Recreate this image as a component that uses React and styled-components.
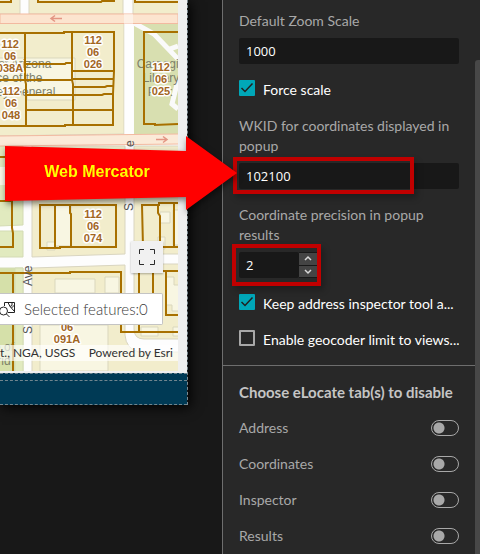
import React from 'react';
import styled, { createGlobalStyle, css } from 'styled-components';

const tabs = ['Address', 'Coordinates', 'Inspector', 'Results'];

function App() {
  return (
    <>
      <GlobalStyle />
      <Page>
        <Canvas>
          <Preview>
            <MapFrame>
              <MapDrawing />
              <FullscreenButton type="button" aria-label="Fullscreen">
                <svg width="16" height="16" viewBox="0 0 16 16" fill="none" stroke="#2b2b2b">
                  <path d="M.5 5V.5H5M11 .5h4.500V5M15.500 11v4.500H11M5 15.500H.5V11" />
                </svg>
              </FullscreenButton>
              <Selection>
                <SelectIcon />
                <span>Selected features:0</span>
              </Selection>
              <Attribution>
                <span>t., NGA, USGS</span>
                <span>Powered by Esri</span>
              </Attribution>
            </MapFrame>
            <PreviewFooter />
          </Preview>
        </Canvas>

        <Panel>
          <Settings>
            <Section>
              <Field>
                <Label htmlFor="zoom">Default Zoom Scale</Label>
                <TextInput id="zoom" type="text" defaultValue="1000" />
              </Field>
              <CheckRow>
                <Checkbox type="checkbox" defaultChecked />
                <CheckText>Force scale</CheckText>
              </CheckRow>
              <Field>
                <Label htmlFor="wkid">WKID for coordinates displayed in popup</Label>
                <InputWrap>
                  <TextInput id="wkid" type="text" defaultValue="102100" />
                  <WkidMark />
                </InputWrap>
              </Field>
              <Field>
                <Label htmlFor="precision">Coordinate precision in popup results</Label>
                <Stepper>
                  <NumberInput id="precision" type="number" defaultValue="2" />
                  <StepButtons>
                    <StepButton type="button" aria-label="Increase">
                      <Chevron d="M1 5l3-3 3 3" />
                    </StepButton>
                    <StepButton type="button" aria-label="Decrease">
                      <Chevron d="M1 2l3 3 3-3" />
                    </StepButton>
                  </StepButtons>
                  <PrecisionMark />
                </Stepper>
              </Field>
              <CheckRow>
                <Checkbox type="checkbox" defaultChecked />
                <CheckText>Keep address inspector tool a...</CheckText>
              </CheckRow>
              <CheckRow>
                <Checkbox type="checkbox" />
                <CheckText>Enable geocoder limit to views...</CheckText>
              </CheckRow>
            </Section>
            <Section $divided>
              <Title>Choose eLocate tab(s) to disable</Title>
              {tabs.map((tab) => (
                <ToggleRow key={tab}>
                  <span>{tab}</span>
                  <Toggle type="checkbox" role="switch" />
                </ToggleRow>
              ))}
            </Section>
          </Settings>
          <ScrollTrack>
            <ScrollThumb />
          </ScrollTrack>
        </Panel>

        <Callout viewBox="0 0 240 80" width="240" height="80" role="img">
          <path d="M5 13l181 5V3l51 37-51 37V64L5 68z" fill="#ff0000" />
          <CalloutText x="97" y="44">Web Mercator</CalloutText>
        </Callout>
      </Page>
    </>
  );
}

function Chevron({ d }) {
  return (
    <svg width="8" height="7" viewBox="0 0 8 7" fill="none" stroke="#d8d8d8" strokeWidth="1.500">
      <path d={d} />
    </svg>
  );
}

function SelectIcon() {
  return (
    <svg width="16" height="18" viewBox="0 0 16 18" fill="none" stroke="#222">
      <path d="M4.500 6V2.500h10v10H8" />
      <path d="M8 2.500l2 4 2-1v-3M10 6.500l4.500 5M14.500 5l-3 3" />
      <circle cx="3.500" cy="11" r="4" fill="#fff" />
      <path d="M6.500 14l3 3" />
    </svg>
  );
}

// every parcel number is stacked on its own lines
function ParcelLabel({ x, y, lines }) {
  return lines.map((line, i) => (
    <ParcelText key={line} x={x} y={y + i * 12}>
      {line}
    </ParcelText>
  ));
}

function MapDrawing() {
  return (
    <MapSvg viewBox="0 0 178 371" preserveAspectRatio="xMinYMin slice">
      <rect width="178" height="371" fill="#fdfdfd" />

      {/* blocks */}
      <g fill="#f2edcc" stroke="#d9d5c0">
        <path d="M-1-1h21v15H-1zM29-1h94v15H29zM133-1h46v15h-46z" />
        <path d="M-1 23h125v111l-125 2z" />
        <path d="M32 146h93v108l-93 3z" />
        <path d="M134 146h45v108h-45z" />
        <path d="M32 268l93-3v70q1 14 14 17h40v20H32z" />
        <path d="M134 264h45v75h-35q-10 0-10-10z" />
      </g>
      <g fill="#e1eabf" stroke="#d3dbb4">
        <path d="M-1 146h24v79l-24 1zM-1 231h24v26H-1z" />
        <path d="M-1 268h24v104H-1z" fill="#d5e0a9" />
        <path d="M15 268h8v104h-8z" />
      </g>
      <path d="M134 24h45v110h-45z" fill="#d8dfb0" />
      <path d="M134 23l20 11 24 25M167 50l11-4M178 80l-6 24 6 5" fill="none" stroke="#fafafa" strokeWidth="5" />

      {/* arterial roads */}
      <path d="M0 14h178v9.500H0z" fill="#fce4cf" stroke="#f2b9a0" />
      <path d="M-1 136l180-2v10l-180 2z" fill="#fbead8" stroke="#f2b9a0" />
      <path d="M124 14h9v120h-9z" fill="#fff" opacity=".45" />
      <g fill="none" stroke="#e39583" strokeWidth="1.500">
        <path d="M62 18.500H51M55 15.500l-4 3 4 3" />
        <path d="M156 139.500h11M163 136.500l4 3-4 3" />
      </g>

      {/* buildings */}
      <g fill="#f8f6e2" stroke="#dad7bd">
        <path d="M-1 58h76v42h-48v-5H-1z" />
        <path d="M55 205h16v41H55zM47 242h8v8h-8z" />
        <path d="M55 279h40v14H55zM105 277h14v16h-14z" />
        <path d="M40 325h68v46H40z" />
        <path d="M160 212h10v11h-10zM158 237h7v12h-7zM173 210h6v35h-6z" />
        <path d="M166 277h8v8h5v26h-7v-6h-6zM141 327h17v9h-17zM173 327h6v9h-6z" />
      </g>
      <path d="M0 167h5v18H0z" fill="#faf8e8" />

      <PlaceText x="25" y="68">st Arizona</PlaceText>
      <PlaceText x="18" y="82">ice of the</PlaceText>
      <PlaceText x="26" y="96">ey General</PlaceText>
      <PlaceText x="161" y="68">Carnegie</PlaceText>
      <PlaceText x="161" y="82">Library</PlaceText>
      <PlaceText x="160" y="96">Park</PlaceText>
      <PlaceText x="4" y="351">e of</PlaceText>
      <PlaceText x="4" y="365">rid</PlaceText>

      {/* parcel lines */}
      <g fill="none" stroke="#a87000" strokeWidth="2">
        <path d="M0 2h11V0M38 0v2h63l1-1h12V0M135 0v2h43" />
        <path d="M0 33h64v-1h50v39l-1 23v31H65v1H0M25 33v47l1 4v42M72 32v48l1 4v41" />
        <path d="M25 64h40l1-1h6M72 71h41M0 80h72l1-1h40M73 87h32l2-1h6M26 95h76l2-1h9M26 110h87" />
        <path d="M178 32h-34v92h11v1l23-1" />
        <path d="M0 201h12v27l1 5v14H0M0 157h5" />
        <path d="M40 205h76v42H60v1H40zM55 205v42M70 205v8l1 1v33" />
        <path d="M178 203h-19v2h-17l1 42h35M158 205v8l2 3v31M174 203v44" />
        <path d="M0 273h70v-1h51v60h57M13 273v98M139 272v60M153 272v21M178 271h-12v44h12M142 271h36" />
      </g>

      <ParcelLabel x={10} y={48} lines={['112', '06', '038A']} />
      <ParcelLabel x={11} y={95} lines={['112', '06', '048']} />
      <ParcelLabel x={93} y={44} lines={['112', '06', '026']} />
      <ParcelLabel x={161} y={71} lines={['112', '06', '025']} />
      <ParcelLabel x={93} y={218} lines={['112', '06', '074']} />
      <ParcelLabel x={67} y={331} lines={['06', '091A']} />

      <StreetText transform="translate(32 286) rotate(-90)">Ave</StreetText>
      <StreetText transform="translate(32 334) rotate(-90)">S</StreetText>
      <StreetText transform="translate(133 211) rotate(-90)">S</StreetText>
      <StreetText transform="translate(134 147) rotate(-90)">e</StreetText>
    </MapSvg>
  );
}

const GlobalStyle = createGlobalStyle`
  * {
    box-sizing: border-box;
  }
  body {
    margin: 0;
    background: #181818;
    font-family: Lato, "Liberation Sans", sans-serif;
    font-size: 14px;
    line-height: 20px;
  }
`;

const Page = styled.div`
  position: relative;
  display: flex;
  min-height: 100vh;
  overflow: hidden;
`;

const Canvas = styled.main`
  flex: 0 1 222px;
  padding-right: 34px;
  background: #181818;
`;

const Preview = styled.div`
  border-right: 1px dashed #7d8b92;
  box-shadow: 2px 2px 12px #000;
`;

const MapFrame = styled.div`
  position: relative;
  display: flex;
  padding: 0 9px 2px 0;
  background: #efefef;
`;

const MapSvg = styled.svg`
  flex: 1;
  min-width: 0;
  height: 371px;
`;

const mapText = css`
  font-family: "Liberation Sans", Arial, sans-serif;
  text-anchor: middle;
`;

const ParcelText = styled.text`
  ${mapText}
  font-size: 11px;
  font-weight: bold;
  fill: #a2661f;
  stroke: #fff;
  stroke-width: 3px;
  stroke-linejoin: round;
  paint-order: stroke;
`;

const PlaceText = styled.text`
  ${mapText}
  font-size: 12px;
  fill: #7d806a;
`;

const StreetText = styled.text`
  font-family: "Liberation Sans", Arial, sans-serif;
  font-size: 12px;
  fill: #555;
`;

const FullscreenButton = styled.button`
  position: absolute;
  top: 241px;
  right: 24px;
  display: flex;
  align-items: center;
  justify-content: center;
  width: 32px;
  height: 32px;
  padding: 0;
  border: 0;
  background: #f1f1f1;
  box-shadow: 0 1px 2px rgba(0, 0, 0, 0.3);
`;

const Selection = styled.div`
  position: absolute;
  top: 293px;
  left: 0;
  right: 24px;
  display: flex;
  align-items: center;
  gap: 8px;
  height: 32px;
  border: 1px solid #c4c4c4;
  border-left: 0;
  border-radius: 0 2px 2px 0;
  background: #fff;
  color: #3a3a3a;
  font-size: 15px;
  font-weight: 300;
  white-space: nowrap;
`;

const Attribution = styled.div`
  position: absolute;
  top: 345px;
  left: 0;
  right: 9px;
  display: flex;
  justify-content: space-between;
  padding-right: 5px;
  background: rgba(255, 255, 255, 0.65);
  color: #323232;
  font-size: 12px;
  line-height: 16px;
  white-space: nowrap;
`;

const PreviewFooter = styled.div`
  height: 32px;
  padding-top: 6px;
  border: dashed #70858e;
  border-width: 1px 0;
  background: #003a55;

  &::before {
    content: '';
    display: block;
    border-top: 1px dashed #70858e;
  }
`;

const Panel = styled.aside`
  flex: 1;
  min-width: 0;
  display: flex;
  border-left: 1px solid #6e6e6e;
  background: #282828;
`;

const Settings = styled.form`
  flex: 1;
  min-width: 0;
`;

const Section = styled.section`
  display: flex;
  flex-direction: column;
  gap: 16px;
  padding: ${({ $divided }) => ($divided ? '16px' : '11px 16px 15px')};
  border-top: ${({ $divided }) => ($divided ? '1px solid #6e6e6e' : '0')};
`;

const Field = styled.div`
  display: flex;
  flex-direction: column;
  gap: 7px;
`;

const Label = styled.label`
  color: #a8a8a8;
`;

const InputWrap = styled.div`
  position: relative;
  display: flex;
`;

const inputStyle = css`
  width: 100%;
  min-width: 0;
  height: 26px;
  padding: 0 7px;
  border: 0;
  border-radius: 2px;
  background: #181818;
  color: #fff;
  font-family: "Open Sans", sans-serif;
  font-size: 13px;
`;

const TextInput = styled.input`
  ${inputStyle}
`;

const NumberInput = styled.input`
  ${inputStyle}
  appearance: textfield;
`;

const redMark = css`
  position: absolute;
  border: 4px solid #c00000;
  box-shadow: 3px 4px 6px rgba(0, 0, 0, 0.25);
  pointer-events: none;
`;

const WkidMark = styled.span`
  ${redMark}
  inset: -6px 45px -5px -6px;
`;

const PrecisionMark = styled.span`
  ${redMark}
  inset: -8px -4px -8px -7px;
`;

const Stepper = styled.div`
  position: relative;
  display: flex;
  width: 78px;
`;

const StepButtons = styled.div`
  display: flex;
  flex-direction: column;
  gap: 1px;
  padding: 1px 0;
  background: #181818;
`;

const StepButton = styled.button`
  flex: 1;
  display: flex;
  align-items: center;
  justify-content: center;
  width: 18px;
  padding: 0;
  border: 0;
  background: #444;
`;

const CheckRow = styled.label`
  display: flex;
  gap: 8px;
  color: #fff;
`;

const checkMark = css`
  border: 0;
  background: #00a7b8
    url("data:image/svg+xml,%3Csvg xmlns='http://www.w3.org/2000/svg' viewBox='0 0 16 16'%3E%3Cpath d='M2.500 8l3.500 3.500 7.500-8' fill='none' stroke='%23202020' stroke-width='1.500'/%3E%3C/svg%3E");
`;

const Checkbox = styled.input`
  appearance: none;
  flex: none;
  width: 16px;
  height: 16px;
  margin: 0;
  border: 2px solid #a8a8a8;
  border-radius: 1px;

  &:checked {
    ${checkMark}
  }
`;

const CheckText = styled.span`
  overflow: hidden;
  white-space: nowrap;
`;

const Title = styled.h2`
  margin: 0;
  color: #c5c5c5;
  font-size: 15px;
  font-weight: bold;
  white-space: nowrap;
`;

const ToggleRow = styled.label`
  display: flex;
  align-items: center;
  justify-content: space-between;
  color: #a8a8a8;
`;

const Toggle = styled.input`
  appearance: none;
  width: 28px;
  height: 16px;
  margin: 0;
  border: 1px solid #a8a8a8;
  border-radius: 8px;
  background: radial-gradient(circle at 7px 7px, #a8a8a8 5px, transparent 6px);

  &:checked {
    background: radial-gradient(circle at 19px 7px, #00a7b8 5px, transparent 6px);
  }
`;

const ScrollTrack = styled.div`
  flex: none;
  width: 5px;
  padding-top: 60px;
  display: flex;
`;

const ScrollThumb = styled.div`
  flex: 1;
  border-radius: 3px 0 0 0;
  background: #484848;
`;

const Callout = styled.svg`
  position: absolute;
  top: 133px;
  left: 0;
  filter: drop-shadow(1px 3px 3px rgba(0, 0, 0, 0.5));
  pointer-events: none;
`;

const CalloutText = styled.text`
  ${mapText}
  font-size: 16px;
  font-weight: bold;
  fill: #ffff00;
`;

export default App;
